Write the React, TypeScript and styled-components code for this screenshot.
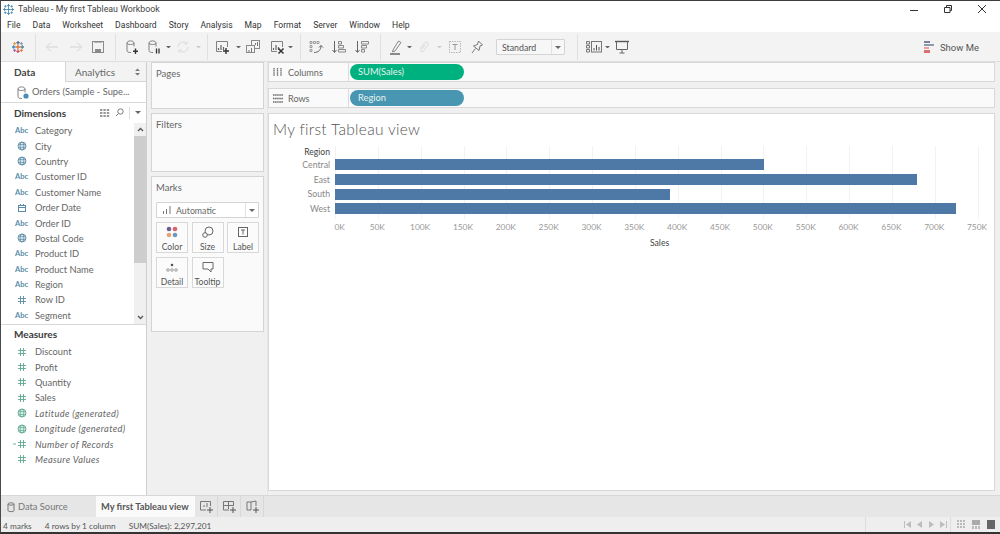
import React from "react";
import styled, { createGlobalStyle } from "styled-components";

const GlobalStyle = createGlobalStyle`
  html, body { margin: 0; padding: 0; background: #fff; }
  * { box-sizing: border-box; }
`;

const BODY_FONT = `"Lato", "Open Sans", sans-serif`;
const UI_FONT = `"Roboto", "Open Sans", sans-serif`;

const Window = styled.div`
  width: 1000px;
  height: 534px;
  display: flex;
  flex-direction: column;
  overflow: hidden;
  background: #f0f0f0;
  border-top: 1px solid #3c3c3c;
  border-left: 1px solid #4a4a4a;
  border-bottom: 2px solid #333;
  font-family: ${BODY_FONT};
  color: #555;
`;

const TitleBar = styled.div`
  height: 16px;
  flex: none;
  background: #fff;
  display: flex;
  align-items: center;
  padding: 0 1px 0 2px;
  font-family: ${UI_FONT};
  font-size: 8.8px;
  color: #444;
`;

const TitleText = styled.span`
  margin-left: 4px;
  flex: 1;
`;

const WindowButton = styled.div`
  width: 34px;
  display: flex;
  justify-content: center;
`;

const MenuBar = styled.div`
  height: 15px;
  flex: none;
  background: #fff;
  display: flex;
  align-items: center;
  padding-left: 6px;
  gap: 12px;
  font-family: ${UI_FONT};
  font-size: 8.6px;
  color: #333;
`;

const Toolbar = styled.div`
  height: 30px;
  flex: none;
  background: #f3f3f3;
  border-bottom: 1px solid #dedede;
  display: flex;
  align-items: center;
  padding: 1px 21px 0 0;
`;

const ToolSlot = styled.div<{ $ml: number; $w?: number }>`
  margin-left: ${({ $ml }) => $ml}px;
  width: ${({ $w }) => $w ?? 16}px;
  height: 16px;
  flex: none;
  display: flex;
  align-items: center;
  justify-content: center;
`;

const ToolSep = styled.div<{ $ml: number }>`
  margin-left: ${({ $ml }) => $ml}px;
  width: 1px;
  height: 26px;
  flex: none;
  background: #e0e0e0;
`;

const Caret = styled.div<{ $ml: number; $light?: boolean }>`
  margin-left: ${({ $ml }) => $ml}px;
  width: 5px;
  flex: none;
  height: 0;
  border-left: 2px solid transparent;
  border-right: 2px solid transparent;
  border-top: 2px solid ${({ $light }) => ($light ? "#ccc" : "#666")};
`;

const Dropdown = styled.div<{ $ml?: number; $w: number }>`
  margin-left: ${({ $ml }) => $ml ?? 0}px;
  width: ${({ $w }) => $w}px;
  height: 16px;
  flex: none;
  display: flex;
  align-items: center;
  background: #f7f7f7;
  border: 1px solid #d4d4d4;
  border-radius: 1px;
  font-size: 8.8px;
  color: #555;
`;

const DropdownLabel = styled.div`
  flex: 1;
  display: flex;
  align-items: center;
  gap: 4px;
  padding-left: 5px;
  height: 100%;
  border-right: 1px solid #e2e2e2;
`;

const DropdownArrow = styled.div`
  width: 12px;
  display: flex;
  justify-content: center;
`;

const DownArrow = styled.div`
  width: 0;
  height: 0;
  border-left: 3px solid transparent;
  border-right: 3px solid transparent;
  border-top: 3px solid #666;
`;

const ShowMe = styled.div`
  margin-left: auto;
  display: flex;
  align-items: center;
  gap: 5px;
  font-family: ${UI_FONT};
  font-size: 9.5px;
  color: #555;
`;

const Main = styled.div`
  flex: 1;
  min-height: 0;
  display: flex;
`;

const DataPane = styled.div`
  width: 146px;
  flex: none;
  background: #fff;
  border-right: 1px solid #cfcfcf;
  display: flex;
  flex-direction: column;
`;

const PaneTabs = styled.div`
  height: 20px;
  flex: none;
  display: flex;
`;

const PaneTab = styled.div<{ $active?: boolean }>`
  width: ${({ $active }) => ($active ? 64 : 81)}px;
  background: ${({ $active }) => ($active ? "#fff" : "#f3f3f3")};
  border-bottom: ${({ $active }) => ($active ? "none" : "1px solid #d4d4d4")};
  border-left: ${({ $active }) => ($active ? "none" : "1px solid #d4d4d4")};
  display: flex;
  align-items: center;
  justify-content: ${({ $active }) => ($active ? "flex-start" : "space-between")};
  padding: ${({ $active }) => ($active ? "0 0 0 13px" : "0 6px 0 9px")};
  font-size: 10px;
  font-weight: ${({ $active }) => ($active ? 700 : 400)};
  color: ${({ $active }) => ($active ? "#444" : "#666")};
`;

const SourceRow = styled.div`
  height: 21px;
  flex: none;
  display: flex;
  align-items: center;
  gap: 3px;
  padding: 0 0 1px 15px;
  font-size: 9.3px;
  color: #666;
  border-bottom: 1px solid #d8d8d8;
`;

const SectionHead = styled.div<{ $h: number }>`
  height: ${({ $h }) => $h}px;
  flex: none;
  display: flex;
  align-items: center;
  padding: 0 5px 1px 13px;
  font-size: 10px;
  font-weight: 700;
  color: #3b3b3b;
`;

const HeadTools = styled.div`
  margin-left: auto;
  display: flex;
  align-items: center;
  gap: 5px;
`;

const HeadDivider = styled.div`
  width: 1px;
  height: 12px;
  background: #ddd;
`;

const DimensionBody = styled.div`
  height: 202px;
  flex: none;
  display: flex;
  border-bottom: 1px solid #d8d8d8;
`;

const FieldList = styled.div`
  flex: 1;
`;

const FieldRow = styled.div<{ $italic?: boolean }>`
  height: 15.4px;
  display: flex;
  align-items: center;
  font-size: 9.3px;
  color: #666;
  font-style: ${({ $italic }) => ($italic ? "italic" : "normal")};
  letter-spacing: ${({ $italic }) => ($italic ? 0.33 : 0)}px;
`;

const FieldIcon = styled.div`
  width: 34px;
  padding: 0 7px 0 14px;
  flex: none;
  display: flex;
  justify-content: center;
  align-items: center;
`;

const AbcIcon = styled.span`
  font-size: 7.5px;
  font-weight: 700;
  font-style: normal;
  color: #5a8ba5;
  letter-spacing: 0;
`;

const Scrollbar = styled.div`
  width: 12px;
  flex: none;
  background: #f0f0f0;
  display: flex;
  flex-direction: column;
  align-items: center;
`;

const ScrollEnd = styled.div`
  height: 13px;
  display: flex;
  align-items: center;
  justify-content: center;
  flex: none;
`;

const ScrollThumb = styled.div`
  width: 100%;
  height: 127px;
  background: #cdcdcd;
`;

const ScrollSpace = styled.div`
  flex: 1;
`;

const CardsColumn = styled.div`
  width: 121px;
  flex: none;
  display: flex;
  flex-direction: column;
  padding: 0 3px 0 4px;
  gap: 4px;
  border-right: 1px solid #e6e6e6;
`;

const Card = styled.div<{ $h: number }>`
  height: ${({ $h }) => $h}px;
  flex: none;
  background: #fafafa;
  border: 1px solid #d4d4d4;
  padding: 5px 4px;
  font-size: 9.5px;
  color: #666;
`;

const MarksType = styled(Dropdown)`
  margin-top: 9px;
  background: #fff;
  width: 103px;
  font-size: 8.8px;
  color: #666;
`;

const TileGrid = styled.div`
  margin-top: 4px;
  display: grid;
  grid-template-columns: 32px 32px 32px;
  grid-auto-rows: 31px;
  gap: 4px 3.5px;
`;

const Tile = styled.div`
  background: #fbfbfb;
  border: 1px solid #d8d8d8;
  display: flex;
  flex-direction: column;
  align-items: center;
  justify-content: space-between;
  padding: 3px 0 0;
  font-size: 8.6px;
  color: #555;
`;

const VizColumn = styled.div`
  flex: 1;
  min-width: 0;
  display: flex;
  flex-direction: column;
  padding: 0 5px 4px 0;
`;

const Shelf = styled.div<{ $mt?: number }>`
  height: 20px;
  margin-top: ${({ $mt }) => $mt ?? 0}px;
  flex: none;
  display: flex;
  background: #fafafa;
  border: 1px solid #d8d8d8;
`;

const ShelfLabel = styled.div`
  width: 80px;
  flex: none;
  display: flex;
  align-items: center;
  gap: 5px;
  padding-left: 4px;
  border-right: 1px solid #dcdcdc;
  font-size: 9.1px;
  color: #666;
`;

const Pill = styled.div<{ $color: string }>`
  margin: 1px 0 0 1px;
  width: 114px;
  height: 15.5px;
  border-radius: 8px;
  background: ${({ $color }) => $color};
  color: #e4f2ee;
  font-size: 9.3px;
  display: flex;
  align-items: center;
  padding-left: 8px;
`;

const SheetCard = styled.div`
  flex: 1;
  margin-top: 5px;
  min-height: 0;
  background: #fff;
  border: 1px solid #d8d8d8;
  padding: 6px 0 0 4px;
`;

const SheetTitle = styled.div`
  font-size: 15.5px;
  font-weight: 300;
  line-height: 19px;
  letter-spacing: 0.3px;
  color: #555;
`;

const Chart = styled.div`
  margin-top: 7px;
  display: flex;
  flex-direction: column;
`;

const ChartRow = styled.div`
  display: flex;
`;

const RowAxis = styled.div`
  width: 57px;
  flex: none;
  text-align: right;
`;

const FieldHead = styled.div`
  height: 11px;
  line-height: 13px;
  font-size: 8.6px;
  color: #444;
`;

const RowLabel = styled.div`
  height: 14.67px;
  line-height: 15.5px;
  font-size: 8.7px;
  color: #888;
`;

const Plot = styled.div`
  width: 644px;
  padding: 11px 0 3px 0;
  margin-left: 5px;
  background-image: repeating-linear-gradient(
    to right,
    #f2f2f2 0,
    #f2f2f2 1px,
    transparent 1px,
    transparent 42.85px
  );
`;

const BarRow = styled.div`
  height: 14.67px;
  display: flex;
  align-items: center;
  padding-top: 1px;
`;

const Bar = styled.div`
  height: 11px;
  background: #4e79a7;
`;

const AxisRow = styled.div`
  display: flex;
  margin-left: 40px;
  margin-top: 2px;
`;

const Tick = styled.div<{ $first?: boolean }>`
  width: 42.85px;
  flex: none;
  height: 13px;
  line-height: 13px;
  font-size: 8.4px;
  color: #999;
  text-align: ${({ $first }) => ($first ? "right" : "center")};
  padding-right: ${({ $first }) => ($first ? 11 : 0)}px;
`;

const AxisTitle = styled.div`
  margin: 3px 0 0 377px;
  font-size: 8.6px;
  line-height: 12px;
  color: #444;
`;

const TabBar = styled.div`
  height: 22px;
  flex: none;
  background: #e6e6e6;
  border-top: 1px solid #d8d8d8;
  display: flex;
  align-items: stretch;
  font-size: 9.3px;
`;

const SheetTab = styled.div<{ $active?: boolean }>`
  width: ${({ $active }) => ($active ? 99 : 95)}px;
  background: ${({ $active }) => ($active ? "#fafafa" : "transparent")};
  display: flex;
  align-items: center;
  gap: 3px;
  padding-left: ${({ $active }) => ($active ? 5 : 6)}px;
  font-weight: ${({ $active }) => ($active ? 700 : 400)};
  color: ${({ $active }) => ($active ? "#555" : "#777")};
`;

const NewTab = styled.div`
  width: 23px;
  display: flex;
  align-items: center;
  justify-content: center;
  border-right: 1px solid #d8d8d8;
`;

const StatusBar = styled.div`
  height: 15px;
  flex: none;
  background: #eeeeee;
  display: flex;
  align-items: center;
  padding-left: 2px;
  font-size: 8.3px;
  color: #555;
`;

const StatusItem = styled.span<{ $ml: number }>`
  margin: 2px 0 0 ${({ $ml }) => $ml}px;
`;

const StatusTools = styled.div`
  margin-left: auto;
  height: 100%;
  width: 135px;
  display: flex;
  border-left: 1px solid #dedede;
`;

const NavGroup = styled.div`
  width: 85px;
  display: flex;
  align-items: center;
  justify-content: flex-end;
  gap: 3px;
  padding-right: 2px;
  border-right: 1px solid #dedede;
`;

const ViewGroup = styled.div`
  flex: 1;
  display: flex;
  align-items: center;
  gap: 7px;
  padding-left: 6px;
`;

// ---- icons ----

const line = { fill: "none", strokeWidth: 1 } as const;

const Cylinder = ({ c = "#808080" }: { c?: string }) => (
  <>
    <path d="M2 4C2 1.2 9 1.2 9 4C9 6 2 6 2 4ZM2 4V11.5C2 13 3.5 13.5 6 13.5M9 4V7.5" {...line} stroke={c} />
  </>
);

const TableauMark = ({ colored, size }: { colored?: boolean; size: number }) => {
  const b = colored
    ? ["#e8762c", "#5b6591", "#d0506a", "#3f8fc4", "#59879b", "#eb912b", "#7099a6", "#9a5fa8"]
    : Array(8).fill("#3f86a8");
  const plus = (x: number, y: number, s: number, c: string, k: number) => (
    <path key={k} d={`M${x - s} ${y}H${x + s}M${x} ${y - s}V${y + s}`} stroke={c} strokeWidth={colored ? 1.5 : 1.1} fill="none" />
  );
  return (
    <svg width={size} height={size} viewBox="0 0 14 14">
      {plus(7, 7, 3, b[0], 0)}
      {plus(7, 2, 2, b[1], 1)}
      {plus(7, 12, 2, b[2], 2)}
      {plus(2, 7, 2, b[3], 3)}
      {plus(12, 7, 2, b[4], 4)}
      {plus(3, 3, 1.5, b[5], 5)}
      {plus(11, 3, 1.5, b[6], 6)}
      {plus(3, 11, 1.5, b[7], 7)}
      {plus(11, 11, 1.5, b[0], 8)}
    </svg>
  );
};

const Tool = ({ children, w = 16 }: { children: React.ReactNode; w?: number }) => (
  <svg width={w} height="16" viewBox={`0 0 ${w} 16`}>
    {children}
  </svg>
);

const MiniBars = ({ c = "#666" }: { c?: string }) => (
  <path d="M4.5 9V11M7 6V11M9.5 8V11" stroke={c} strokeWidth="1.2" fill="none" />
);

const ToolIcons: Record<string, React.ReactNode> = {
  back: <Tool><path d="M14 8H3M7 3.5L2.5 8L7 12.5" {...line} stroke="#d4d4d4" /></Tool>,
  forward: <Tool><path d="M2 8H13M9 3.5L13.5 8L9 12.5" {...line} stroke="#d4d4d4" /></Tool>,
  save: (
    <Tool>
      <rect x="2.5" y="2.5" width="11" height="11" {...line} stroke="#8a8a8a" />
      <path d="M4 3.5H12" stroke="#b5b5b5" />
      <rect x="5" y="10" width="6" height="3.5" fill="#8a8a8a" />
    </Tool>
  ),
  addSource: (
    <Tool>
      <g transform="translate(1 0)"><Cylinder /></g>
      <path d="M11.5 9.5V15M9 12.2H14" stroke="#333" strokeWidth="1.4" fill="none" />
    </Tool>
  ),
  pause: (
    <Tool>
      <g transform="translate(1 0)"><Cylinder /></g>
      <path d="M10.5 9.5V14.5M13 9.5V14.5" stroke="#333" strokeWidth="1.3" fill="none" />
    </Tool>
  ),
  refresh: (
    <Tool>
      <path d="M3 8a5 5 0 0 1 9-3M13 8a5 5 0 0 1-9 3M12 2V5H9M4 14V11H7" {...line} stroke="#dcdcdc" />
    </Tool>
  ),
  newSheet: (
    <Tool>
      <path d="M8 12.5H2.5V2.5H13.5V8" {...line} stroke="#808080" />
      <MiniBars />
      <path d="M12 9V15M9 12H15" stroke="#333" strokeWidth="1.4" fill="none" />
    </Tool>
  ),
  duplicate: (
    <Tool>
      <rect x="6.5" y="1.5" width="8" height="8" {...line} stroke="#8a8a8a" />
      <rect x="1.5" y="6.5" width="8" height="7" fill="#f3f3f3" stroke="#8a8a8a" />
      <path d="M4 11V13M6.5 9V13M10.5 4V6M12.5 3V7" stroke="#777" fill="none" />
    </Tool>
  ),
  clear: (
    <Tool>
      <path d="M8 12.5H2.5V2.5H13.5V8" {...line} stroke="#808080" />
      <MiniBars />
      <path d="M9.5 9.5L14.5 14.5M14.5 9.5L9.5 14.5" stroke="#333" strokeWidth="1.5" fill="none" />
    </Tool>
  ),
  swap: (
    <Tool>
      <path d="M2 2.5H4V4.5H2ZM5.5 2.5H7.5V4.5H5.5ZM9 2.5H11V4.5H9ZM2 6.5H4V8.5H2ZM2 10.5H4V12.5H2Z" {...line} stroke="#888" strokeWidth="0.8" />
      <path d="M6 13.5C10.5 13.5 13 11 13 6.5M11 8.5L13 6.5L15 8.5" {...line} stroke="#666" />
    </Tool>
  ),
  sortAsc: (
    <Tool>
      <path d="M3.5 2V13M1.5 11L3.5 13.5L5.5 11" stroke="#666" fill="none" />
      <path d="M7.5 2.5H10.5V5H7.5ZM7.5 6.5H12.5V9H7.5ZM7.5 10.5H14.5V13H7.5Z" {...line} stroke="#888" />
    </Tool>
  ),
  sortDesc: (
    <Tool>
      <path d="M3.5 2V13M1.5 11L3.5 13.5L5.5 11" stroke="#666" fill="none" />
      <path d="M7.5 2.5H14.5V5H7.5ZM7.5 6.5H12.5V9H7.5ZM7.5 10.5H10.5V13H7.5Z" {...line} stroke="#888" />
    </Tool>
  ),
  highlight: (
    <Tool>
      <path d="M5 11L10.5 2L13 3.5L7 12L4.5 13Z" {...line} stroke="#888" />
      <path d="M2 15H12" stroke="#444" strokeWidth="1.2" />
    </Tool>
  ),
  clip: (
    <Tool>
      <path d="M4.5 9.5L9 3.5a2 2 0 0 1 3 2.5L7 12.5a1.3 1.3 0 0 1-2-1.6L9.5 5.5" {...line} stroke="#dadada" />
    </Tool>
  ),
  labels: (
    <Tool>
      <rect x="2.5" y="2.5" width="11" height="11" {...line} stroke="#b5b5b5" strokeDasharray="1.5 1" />
      <path d="M5.5 5.5H10.5M8 5.5V11" stroke="#999" fill="none" />
    </Tool>
  ),
  pin: (
    <Tool>
      <path d="M9.5 2L13.5 6L11 7L10 11.5L4.5 7L8.5 5.5ZM6.5 9.5L3 14" {...line} stroke="#777" />
    </Tool>
  ),
  cards: (
    <Tool w={18}>
      <path d="M1.5 2.5H4.5V5H1.5ZM1.5 6.5H4.5V9H1.5ZM1.5 10.5H4.5V13H1.5Z" {...line} stroke="#777" />
      <rect x="6.5" y="2.5" width="10" height="10.5" {...line} stroke="#777" />
      <path d="M9 9V11.5M11.5 6V11.5M14 8V11.5" stroke="#555" fill="none" />
    </Tool>
  ),
  present: (
    <Tool>
      <path d="M1 2.5H15" stroke="#555" strokeWidth="1.4" />
      <path d="M2.5 2.5V10.5H13.5V2.5M8 10.5V14M5.5 14H10.5" {...line} stroke="#666" />
    </Tool>
  ),
};

const Globe = ({ c }: { c: string }) => (
  <svg width="10" height="10" viewBox="0 0 10 10">
    <circle cx="5" cy="5" r="4" fill={c} fillOpacity="0.2" stroke={c} strokeWidth="0.9" />
    <ellipse cx="5" cy="5" rx="1.8" ry="4" fill="none" stroke={c} strokeWidth="0.7" />
    <path d="M1 3.6H9M1 6.4H9" stroke={c} strokeWidth="0.7" />
  </svg>
);

const Hash = ({ c, dashed }: { c: string; dashed?: boolean }) => (
  <svg width="10" height="10" viewBox="0 0 10 10" overflow="visible">
    <path d="M3.5 1V9M6.5 1V9M1 3.5H9M1 6.5H9" stroke={c} strokeWidth="0.9" fill="none" />
    {dashed && <path d="M-4 5H-1" stroke={c} strokeWidth="0.9" />}
  </svg>
);

const CalendarIcon = () => (
  <svg width="10" height="10" viewBox="0 0 10 10">
    <rect x="1.5" y="2.5" width="7" height="6" fill="none" stroke="#5a8ba5" />
    <path d="M1.5 4.5H8.5M3.5 1V2.5M6.5 1V2.5" stroke="#5a8ba5" />
  </svg>
);

type Kind = "abc" | "globe" | "date" | "hash" | "calc";
const BLUE = "#5a8ba5";
const GREEN = "#5fa892";

const dimensions: [string, Kind][] = [
  ["Category", "abc"],
  ["City", "globe"],
  ["Country", "globe"],
  ["Customer ID", "abc"],
  ["Customer Name", "abc"],
  ["Order Date", "date"],
  ["Order ID", "abc"],
  ["Postal Code", "globe"],
  ["Product ID", "abc"],
  ["Product Name", "abc"],
  ["Region", "abc"],
  ["Row ID", "hash"],
  ["Segment", "abc"],
];

const measures: [string, Kind, boolean][] = [
  ["Discount", "hash", false],
  ["Profit", "hash", false],
  ["Quantity", "hash", false],
  ["Sales", "hash", false],
  ["Latitude (generated)", "globe", true],
  ["Longitude (generated)", "globe", true],
  ["Number of Records", "calc", true],
  ["Measure Values", "hash", true],
];

const FieldGlyph = ({ kind, c }: { kind: Kind; c: string }) => {
  if (kind === "abc") return <AbcIcon>Abc</AbcIcon>;
  if (kind === "globe") return <Globe c={c} />;
  if (kind === "date") return <CalendarIcon />;
  return <Hash c={c} dashed={kind === "calc"} />;
};

const regions = [
  { name: "Central", width: 429 },
  { name: "East", width: 582 },
  { name: "South", width: 335 },
  { name: "West", width: 621 },
];

const ticks = ["0K", "50K", "100K", "150K", "200K", "250K", "300K", "350K", "400K", "450K", "500K", "550K", "600K", "650K", "700K", "750K"];

const menus = ["File", "Data", "Worksheet", "Dashboard", "Story", "Analysis", "Map", "Format", "Server", "Window", "Help"];

const SmallPlus = ({ children }: { children: React.ReactNode }) => (
  <svg width="15" height="15" viewBox="0 0 15 15">
    {children}
    <path d="M11 8V14M8 11H14" stroke="#555" strokeWidth="1" fill="none" />
  </svg>
);

const NavIcon = ({ d }: { d: string }) => (
  <svg width="9" height="9" viewBox="0 0 9 9">
    <path d={d} fill="#bdbdbd" />
  </svg>
);

export default function App() {
  return (
    <Window>
      <GlobalStyle />
      <TitleBar>
        <TableauMark size={11} />
        <TitleText>Tableau - My first Tableau Workbook</TitleText>
        <WindowButton>
          <svg width="10" height="10" viewBox="0 0 10 10"><path d="M1 6.5H9" stroke="#333" /></svg>
        </WindowButton>
        <WindowButton>
          <svg width="10" height="10" viewBox="0 0 10 10"><path d="M1.5 3.5H7V8.5H1.5ZM3.5 3V1.5H8.5V6.5H7" fill="none" stroke="#333" /></svg>
        </WindowButton>
        <WindowButton>
          <svg width="10" height="10" viewBox="0 0 10 10"><path d="M1 1L9 9M9 1L1 9" stroke="#333" /></svg>
        </WindowButton>
      </TitleBar>
      <MenuBar>
        {menus.map((m) => <span key={m}>{m}</span>)}
      </MenuBar>
      <Toolbar>
        <ToolSlot $ml={9}><TableauMark colored size={12} /></ToolSlot>
        <ToolSep $ml={9} />
        <ToolSlot $ml={8}>{ToolIcons.back}</ToolSlot>
        <ToolSlot $ml={8}>{ToolIcons.forward}</ToolSlot>
        <ToolSlot $ml={6}>{ToolIcons.save}</ToolSlot>
        <ToolSep $ml={9} />
        <ToolSlot $ml={8}>{ToolIcons.addSource}</ToolSlot>
        <ToolSlot $ml={6}>{ToolIcons.pause}</ToolSlot>
        <Caret $ml={4} />
        <ToolSlot $ml={4}>{ToolIcons.refresh}</ToolSlot>
        <Caret $ml={5} $light />
        <ToolSep $ml={6} />
        <ToolSlot $ml={6}>{ToolIcons.newSheet}</ToolSlot>
        <Caret $ml={6} />
        <ToolSlot $ml={4}>{ToolIcons.duplicate}</ToolSlot>
        <ToolSlot $ml={8}>{ToolIcons.clear}</ToolSlot>
        <Caret $ml={3} />
        <ToolSep $ml={7} />
        <ToolSlot $ml={7}>{ToolIcons.swap}</ToolSlot>
        <ToolSlot $ml={7}>{ToolIcons.sortAsc}</ToolSlot>
        <ToolSlot $ml={7}>{ToolIcons.sortDesc}</ToolSlot>
        <ToolSep $ml={10} />
        <ToolSlot $ml={7}>{ToolIcons.highlight}</ToolSlot>
        <Caret $ml={3} />
        <ToolSlot $ml={4}>{ToolIcons.clip}</ToolSlot>
        <Caret $ml={5} $light />
        <ToolSlot $ml={5}>{ToolIcons.labels}</ToolSlot>
        <ToolSlot $ml={6}>{ToolIcons.pin}</ToolSlot>
        <Dropdown $ml={11} $w={69}>
          <DropdownLabel>Standard</DropdownLabel>
          <DropdownArrow><DownArrow /></DropdownArrow>
        </Dropdown>
        <ToolSep $ml={12} />
        <ToolSlot $ml={7} $w={18}>{ToolIcons.cards}</ToolSlot>
        <Caret $ml={2} />
        <ToolSlot $ml={4}>{ToolIcons.present}</ToolSlot>
        <ShowMe>
          <svg width="11" height="12" viewBox="0 0 11 12">
            <rect x="0" y="0" width="6" height="2" fill="#7c7f9c" />
            <rect x="0" y="3" width="10" height="2" fill="#8d99ae" />
            <rect x="0" y="6" width="5" height="2" fill="#e8a09a" />
            <rect x="0" y="9" width="6" height="3" fill="#d9706c" />
          </svg>
          Show Me
        </ShowMe>
      </Toolbar>
      <Main>
        <DataPane>
          <PaneTabs>
            <PaneTab $active>Data</PaneTab>
            <PaneTab>
              Analytics
              <svg width="5" height="8" viewBox="0 0 5 8"><path d="M0 3L2.5 0.5L5 3ZM0 5L2.5 7.5L5 5Z" fill="#777" /></svg>
            </PaneTab>
          </PaneTabs>
          <SourceRow>
            <svg width="13" height="14" viewBox="0 0 13 14">
              <Cylinder />
              <circle cx="10" cy="11" r="2.6" fill="#4a8bb0" />
            </svg>
            Orders (Sample - Supe...
          </SourceRow>
          <SectionHead $h={20}>
            Dimensions
            <HeadTools>
              <svg width="10" height="8" viewBox="0 0 10 8">
                <path d="M0 1H10M0 4H10M0 7H10" stroke="#777" strokeWidth="1.4" strokeDasharray="2.4 1" />
              </svg>
              <svg width="9" height="9" viewBox="0 0 9 9">
                <circle cx="5.5" cy="3.5" r="2.7" fill="none" stroke="#777" />
                <path d="M3.5 5.5L1 8" stroke="#777" />
              </svg>
              <HeadDivider />
              <DownArrow />
            </HeadTools>
          </SectionHead>
          <DimensionBody>
            <FieldList>
              {dimensions.map(([name, kind]) => (
                <FieldRow key={name}>
                  <FieldIcon><FieldGlyph kind={kind} c={BLUE} /></FieldIcon>
                  {name}
                </FieldRow>
              ))}
            </FieldList>
            <Scrollbar>
              <ScrollEnd>
                <svg width="7" height="5" viewBox="0 0 7 5"><path d="M1 4L3.5 1.5L6 4" fill="none" stroke="#555" strokeWidth="1.3" /></svg>
              </ScrollEnd>
              <ScrollThumb />
              <ScrollSpace />
              <ScrollEnd>
                <svg width="7" height="5" viewBox="0 0 7 5"><path d="M1 1L3.5 3.5L6 1" fill="none" stroke="#555" strokeWidth="1.3" /></svg>
              </ScrollEnd>
            </Scrollbar>
          </DimensionBody>
          <SectionHead $h={19}>Measures</SectionHead>
          <FieldList>
            {measures.map(([name, kind, italic]) => (
              <FieldRow key={name} $italic={italic}>
                <FieldIcon><FieldGlyph kind={kind} c={GREEN} /></FieldIcon>
                {name}
              </FieldRow>
            ))}
          </FieldList>
        </DataPane>
        <CardsColumn>
          <Card $h={47}>Pages</Card>
          <Card $h={59}>Filters</Card>
          <Card $h={156}>
            Marks
            <MarksType $w={103}>
              <DropdownLabel>
                <svg width="10" height="10" viewBox="0 0 10 10"><path d="M1.5 6V9M4.5 4V9M8 1V9" stroke="#777" fill="none" /></svg>
                Automatic
              </DropdownLabel>
              <DropdownArrow><DownArrow /></DropdownArrow>
            </MarksType>
            <TileGrid>
              <Tile>
                <svg width="12" height="12" viewBox="0 0 12 12">
                  <circle cx="3" cy="3" r="2.3" fill="#6f5f90" />
                  <circle cx="9" cy="3" r="2.3" fill="#d9626b" />
                  <circle cx="3" cy="9" r="2.3" fill="#e8a36f" />
                  <circle cx="9" cy="9" r="2.3" fill="#6f97c0" />
                </svg>
                Color
              </Tile>
              <Tile>
                <svg width="12" height="12" viewBox="0 0 12 12">
                  <circle cx="7" cy="5" r="4" fill="none" stroke="#666" />
                  <circle cx="3" cy="9" r="2.3" fill="#fbfbfb" stroke="#666" />
                </svg>
                Size
              </Tile>
              <Tile>
                <svg width="12" height="12" viewBox="0 0 12 12">
                  <rect x="1.5" y="1.5" width="9" height="9" fill="none" stroke="#666" />
                  <path d="M4 4H8M6 4V8.5" stroke="#666" fill="none" />
                </svg>
                Label
              </Tile>
              <Tile>
                <svg width="12" height="12" viewBox="0 0 12 12">
                  <circle cx="6" cy="4" r="1.3" fill="#555" />
                  <circle cx="2" cy="9" r="1.3" fill="none" stroke="#777" strokeWidth="0.7" />
                  <circle cx="6" cy="9" r="1.3" fill="none" stroke="#777" strokeWidth="0.7" />
                  <circle cx="10" cy="9" r="1.3" fill="none" stroke="#777" strokeWidth="0.7" />
                </svg>
                Detail
              </Tile>
              <Tile>
                <svg width="12" height="12" viewBox="0 0 12 12">
                  <path d="M1 1.5H11V8H9V11L6 8H1Z" fill="none" stroke="#666" />
                </svg>
                Tooltip
              </Tile>
            </TileGrid>
          </Card>
        </CardsColumn>
        <VizColumn>
          <Shelf>
            <ShelfLabel>
              <svg width="10" height="10" viewBox="0 0 10 10"><path d="M1 1V9M4.5 1V9M8 1V9" stroke="#666" strokeWidth="1.3" strokeDasharray="1.5 0.6" /></svg>
              Columns
            </ShelfLabel>
            <Pill $color="#00b180">SUM(Sales)</Pill>
          </Shelf>
          <Shelf $mt={6}>
            <ShelfLabel>
              <svg width="10" height="9" viewBox="0 0 10 9"><path d="M0 1H10M0 4.5H10M0 8H10" stroke="#666" strokeWidth="1.3" strokeDasharray="1.5 0.6" /></svg>
              Rows
            </ShelfLabel>
            <Pill $color="#4996b2">Region</Pill>
          </Shelf>
          <SheetCard>
            <SheetTitle>My first Tableau view</SheetTitle>
            <Chart>
              <ChartRow>
                <RowAxis>
                  <FieldHead>Region</FieldHead>
                  {regions.map((r) => <RowLabel key={r.name}>{r.name}</RowLabel>)}
                </RowAxis>
                <Plot>
                  {regions.map((r) => (
                    <BarRow key={r.name}>
                      <Bar style={{ width: r.width }} />
                    </BarRow>
                  ))}
                </Plot>
              </ChartRow>
              <AxisRow>
                {ticks.map((t, i) => <Tick key={t} $first={i === 0}>{t}</Tick>)}
              </AxisRow>
              <AxisTitle>Sales</AxisTitle>
            </Chart>
          </SheetCard>
        </VizColumn>
      </Main>
      <TabBar>
        <SheetTab>
          <svg width="8" height="12" viewBox="0 0 8 12">
            <path d="M1 3V9.5C1 11 7 11 7 9.5V3M1 3C1 1.5 7 1.5 7 3C7 4.5 1 4.5 1 3" fill="none" stroke="#777" />
          </svg>
          Data Source
        </SheetTab>
        <SheetTab $active>My first Tableau view</SheetTab>
        <NewTab>
          <SmallPlus>
            <path d="M7 11H1.5V2.5H11.5V7M5 8V6M8 8V4" fill="none" stroke="#777" />
          </SmallPlus>
        </NewTab>
        <NewTab>
          <SmallPlus>
            <path d="M7 11H1.5V2.5H11.5V7M1.5 6.5H11.5M6.5 2.5V10" fill="none" stroke="#777" />
          </SmallPlus>
        </NewTab>
        <NewTab>
          <SmallPlus>
            <path d="M2 3H6V11H2ZM6 3L11 2V7" fill="none" stroke="#777" />
          </SmallPlus>
        </NewTab>
      </TabBar>
      <StatusBar>
        <StatusItem $ml={0}>4 marks</StatusItem>
        <StatusItem $ml={13}>4 rows by 1 column</StatusItem>
        <StatusItem $ml={13}>SUM(Sales): 2,297,201</StatusItem>
        <StatusTools>
          <NavGroup>
            <NavIcon d="M1 1H2V8H1ZM8 1V8L3 4.5Z" />
            <NavIcon d="M7 1V8L2 4.5Z" />
            <NavIcon d="M2 1V8L7 4.5Z" />
            <NavIcon d="M7 1H8V8H7ZM1 1V8L6 4.5Z" />
          </NavGroup>
          <ViewGroup>
            <svg width="8" height="9" viewBox="0 0 8 9"><path d="M1 0V9M4 0V9M7 0V9" stroke="#bbb" strokeWidth="2" strokeDasharray="2 1" /></svg>
            <svg width="8" height="9" viewBox="0 0 8 9"><rect width="8" height="5" fill="#aaa" /><path d="M0 7.5H8" stroke="#bbb" strokeWidth="3" strokeDasharray="2 1" /></svg>
            <svg width="8" height="9" viewBox="0 0 8 9"><rect width="8" height="9" fill="#666" /></svg>
          </ViewGroup>
        </StatusTools>
      </StatusBar>
    </Window>
  );
}
